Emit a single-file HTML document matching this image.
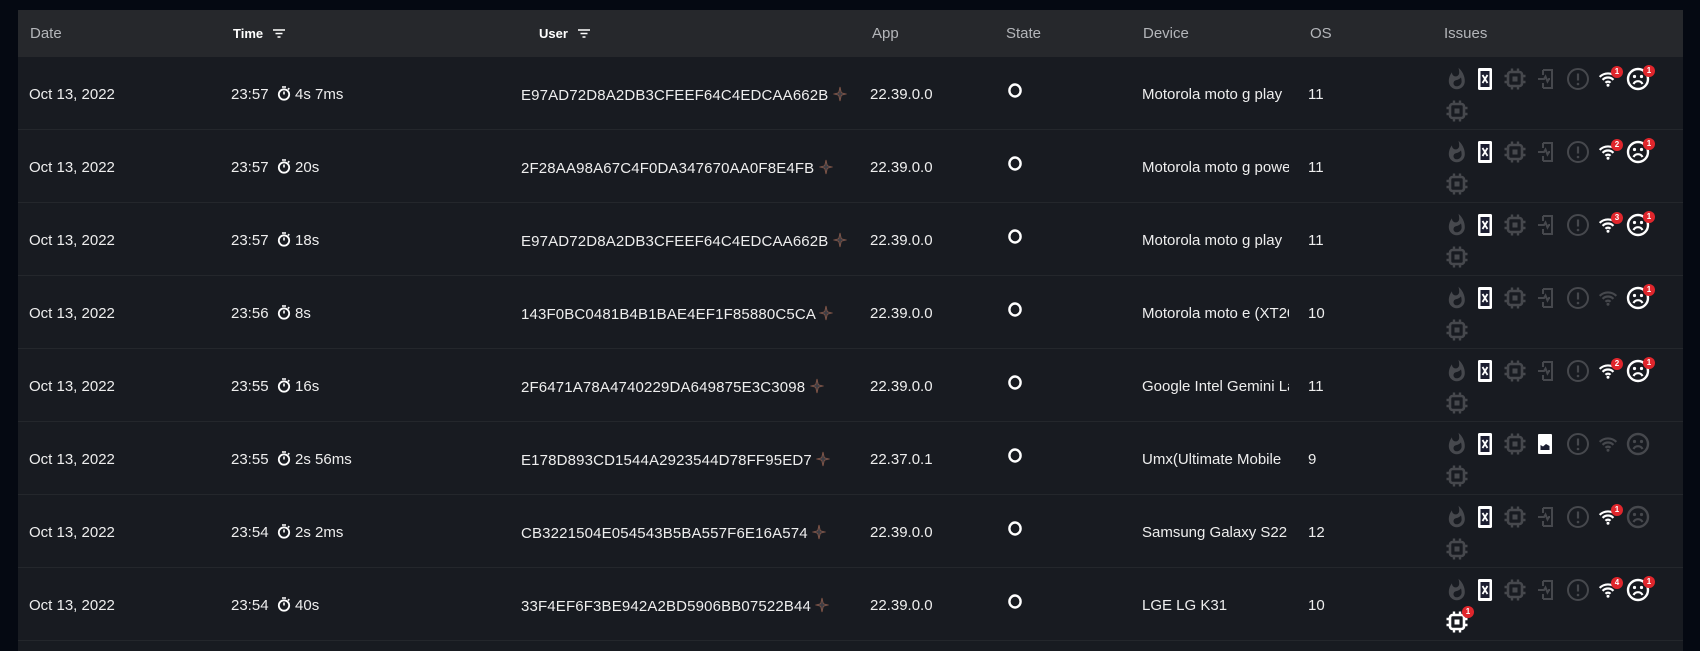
<!DOCTYPE html>
<html><head><meta charset="utf-8"><style>
*{margin:0;padding:0;box-sizing:border-box}
body{width:1700px;height:651px;background:#050912;font-family:"Liberation Sans",sans-serif;overflow:hidden;position:relative}
.tbl{position:absolute;left:18px;top:10px;width:1665px;height:641px;background:#181b21}
.hdr{position:relative;height:47px;background:#26282c}
.hdr span{position:absolute;top:15px;font-size:15px;color:#b4b6ba}
.hdr b{position:absolute;top:16px;font-size:13px;color:#fff;font-weight:bold}
.fl{display:inline-block;vertical-align:middle;margin-left:10px;margin-top:-3px}
.row{position:relative;height:73px;border-bottom:1px solid #24272c;color:#eeeeee;font-size:15px}
.row .c{position:absolute;top:29px;white-space:nowrap}
.uid{letter-spacing:0.15px}
.dev{overflow:hidden;width:147px}
.ic{position:absolute;left:1427px;top:10px;width:230px}
.ic svg{position:absolute}
.bd{position:absolute;width:12px;height:12px;border-radius:6px;background:#e0262c;color:#fff;font-size:8px;line-height:12px;text-align:center;font-weight:bold}
</style></head><body>
<svg width="0" height="0" style="position:absolute">
<defs>
<symbol id="flame" viewBox="0 0 24 24"><path fill="#46484d" d="M13.5.7s.7 2.7.7 4.9c0 2.1-1.4 3.8-3.5 3.8S7 7.7 7 5.6l.03-.36C5 7.7 3.8 10.9 3.8 14.3c0 4.4 3.6 8 8 8s8-3.6 8-8C19.9 8.9 17.3 4.1 13.5.7zM11.7 19.3c-1.8 0-3.2-1.4-3.2-3.1 0-1.6 1-2.8 2.8-3.1 1.8-.4 3.6-1.2 4.7-2.7.4 1.3.6 2.7.6 4.1 0 2.6-2.2 4.8-4.9 4.8z"/></symbol>
<symbol id="act" viewBox="0 0 24 24"><path fill="none" stroke="#46484d" stroke-width="2" d="M9 3h9v18H9M9 3v5M9 16v5M4 12h6l1.5-2.5 2 5 1.5-2.5H16"/></symbol>
<symbol id="alert" viewBox="0 0 24 24"><circle cx="12" cy="12" r="10" fill="none" stroke="#46484d" stroke-width="2"/><path d="M12 6.5v7" stroke="#46484d" stroke-width="2.2"/><circle cx="12" cy="17" r="1.3" fill="#46484d"/></symbol>
<symbol id="phone" viewBox="0 0 14 22"><rect x="0" y="0" width="14" height="22" rx="1.5" fill="#fff"/><rect x="2.5" y="3" width="9" height="16" fill="#1b1d30"/><path d="M4.5 7l5 8M9.5 7l-5 8" stroke="#fff" stroke-width="1.8"/></symbol>
</defs></svg>
<div class="tbl">
<div class="hdr">
<span style="left:12px">Date</span>
<b style="left:215px">Time<svg class="fl" width="12" height="9"><path d="M0 1h12M2.5 4.5h7M4.5 8h3" stroke="#fff" stroke-width="1.5"/></svg></b>
<b style="left:521px">User<svg class="fl" width="12" height="9"><path d="M0 1h12M2.5 4.5h7M4.5 8h3" stroke="#fff" stroke-width="1.5"/></svg></b>
<span style="left:854px">App</span>
<span style="left:988px">State</span>
<span style="left:1125px">Device</span>
<span style="left:1292px">OS</span>
<span style="left:1426px">Issues</span>
</div>
<div id="rows"></div>
</div>
<script>
var data=[
["23:57","4s 7ms","E97AD72D8A2DB3CFEEF64C4EDCAA662B","22.39.0.0","Motorola moto g play","11","1","1",0,0],
["23:57","20s","2F28AA98A67C4F0DA347670AA0F8E4FB","22.39.0.0","Motorola moto g power","11","2","1",0,0],
["23:57","18s","E97AD72D8A2DB3CFEEF64C4EDCAA662B","22.39.0.0","Motorola moto g play","11","3","1",0,0],
["23:56","8s","143F0BC0481B4B1BAE4EF1F85880C5CA","22.39.0.0","Motorola moto e (XT2052)","10","","1",0,0],
["23:55","16s","2F6471A78A4740229DA649875E3C3098","22.39.0.0","Google Intel Gemini Lake","11","2","1",0,0],
["23:55","2s 56ms","E178D893CD1544A2923544D78FF95ED7","22.37.0.1","Umx(Ultimate Mobile","9","","",1,0],
["23:54","2s 2ms","CB3221504E054543B5BA557F6E16A574","22.39.0.0","Samsung Galaxy S22","12","1","",0,0],
["23:54","40s","33F4EF6F3BE942A2BD5906BB07522B44","22.39.0.0","LGE LG K31","10","4","1",0,1]];
function chip(c,x,y){return '<svg style="left:'+x+'px;top:'+y+'px" width="24" height="24" viewBox="0 0 24 24"><rect x="5" y="5" width="14" height="14" rx="2.5" fill="none" stroke="'+c+'" stroke-width="2.6"/><rect x="9.5" y="9.5" width="5" height="5" fill="'+c+'"/><path d="M9 1.5v3.5M15 1.5v3.5M9 19v3.5M15 19v3.5M1.5 9h3.5M1.5 15h3.5M19 9h3.5M19 15h3.5" stroke="'+c+'" stroke-width="2.4"/></svg>';}
var h='';
data.forEach(function(r){
var wc=r[6]?'#fff':'#46484d', sc=r[7]?'#fff':'#46484d', cc=r[9]?'#fff':'#46484d';
h+='<div class="row"><span class="c" style="left:11px">Oct 13, 2022</span>'+
'<span class="c" style="left:213px">'+r[0]+'&nbsp;&nbsp;<svg width="14" height="15" viewBox="0 0 14 15" style="vertical-align:-2px"><circle cx="7" cy="8.5" r="5.2" fill="none" stroke="#fff" stroke-width="1.8"/><path d="M5 1h4M7 8.5V5.5M11 3.5l1.3-1.3" stroke="#fff" stroke-width="1.6"/></svg> '+r[1]+'</span>'+
'<span class="c uid" style="left:503px">'+r[2]+' <svg width="14" height="16" viewBox="0 0 14 16" style="vertical-align:-2px"><path d="M7 1L8.3 6.7 13 8 8.3 9.3 7 15 5.7 9.3 1 8 5.7 6.7z" fill="#3a3c44" stroke="#8a5a4a" stroke-width="0.8"/></svg></span>'+
'<span class="c" style="left:852px">'+r[3]+'</span>'+
'<span class="c" style="left:989px;top:25px"><svg width="16" height="17"><ellipse cx="8" cy="8.5" rx="5.6" ry="6" fill="none" stroke="#fff" stroke-width="2.4"/></svg></span>'+
'<span class="c dev" style="left:1124px">'+r[4]+'</span>'+
'<span class="c" style="left:1290px">'+r[5]+'</span>'+
'<div class="ic">'+
'<svg style="left:0;top:0" width="24" height="24"><use href="#flame"/></svg>'+
'<svg style="left:33px;top:1px" width="14" height="22"><use href="#phone"/></svg>'+
chip('#46484d',58,0)+
(r[8]?'<svg style="left:93px;top:2px" width="14" height="20"><rect width="14" height="20" rx="1" fill="#fff"/><path d="M2.5 16v-5l2.5 1.5 3-2.5 3.5 2v4z" fill="#1b1d30"/></svg>':'<svg style="left:89px;top:0" width="24" height="24"><use href="#act"/></svg>')+
'<svg style="left:121px;top:0" width="24" height="24"><use href="#alert"/></svg>'+
'<svg style="left:152px;top:2px" width="22" height="20" viewBox="0 0 24 24"><path fill="none" stroke="'+wc+'" stroke-width="2.6" d="M2 9.5a14 14 0 0 1 20 0M5.5 13a9 9 0 0 1 13 0M9 16.5a4 4 0 0 1 6 0"/><circle cx="12" cy="19.5" r="1.8" fill="'+wc+'"/></svg>'+
(r[6]?'<div class="bd" style="left:166px;top:-1px">'+r[6]+'</div>':'')+
'<svg style="left:181px;top:0" width="24" height="24" viewBox="0 0 24 24"><circle cx="12" cy="12" r="10" fill="none" stroke="'+sc+'" stroke-width="2.4"/><circle cx="8.5" cy="9.5" r="1.6" fill="'+sc+'"/><circle cx="15.5" cy="9.5" r="1.6" fill="'+sc+'"/><path d="M7.5 17a5 5 0 0 1 9 0" fill="none" stroke="'+sc+'" stroke-width="2.2"/></svg>'+
(r[7]?'<div class="bd" style="left:198px;top:-2px">'+r[7]+'</div>':'')+
chip(cc,0,32)+
(r[9]?'<div class="bd" style="left:17px;top:28px">1</div>':'')+
'</div></div>';
});
document.getElementById('rows').innerHTML=h;
</script>
</body></html>
